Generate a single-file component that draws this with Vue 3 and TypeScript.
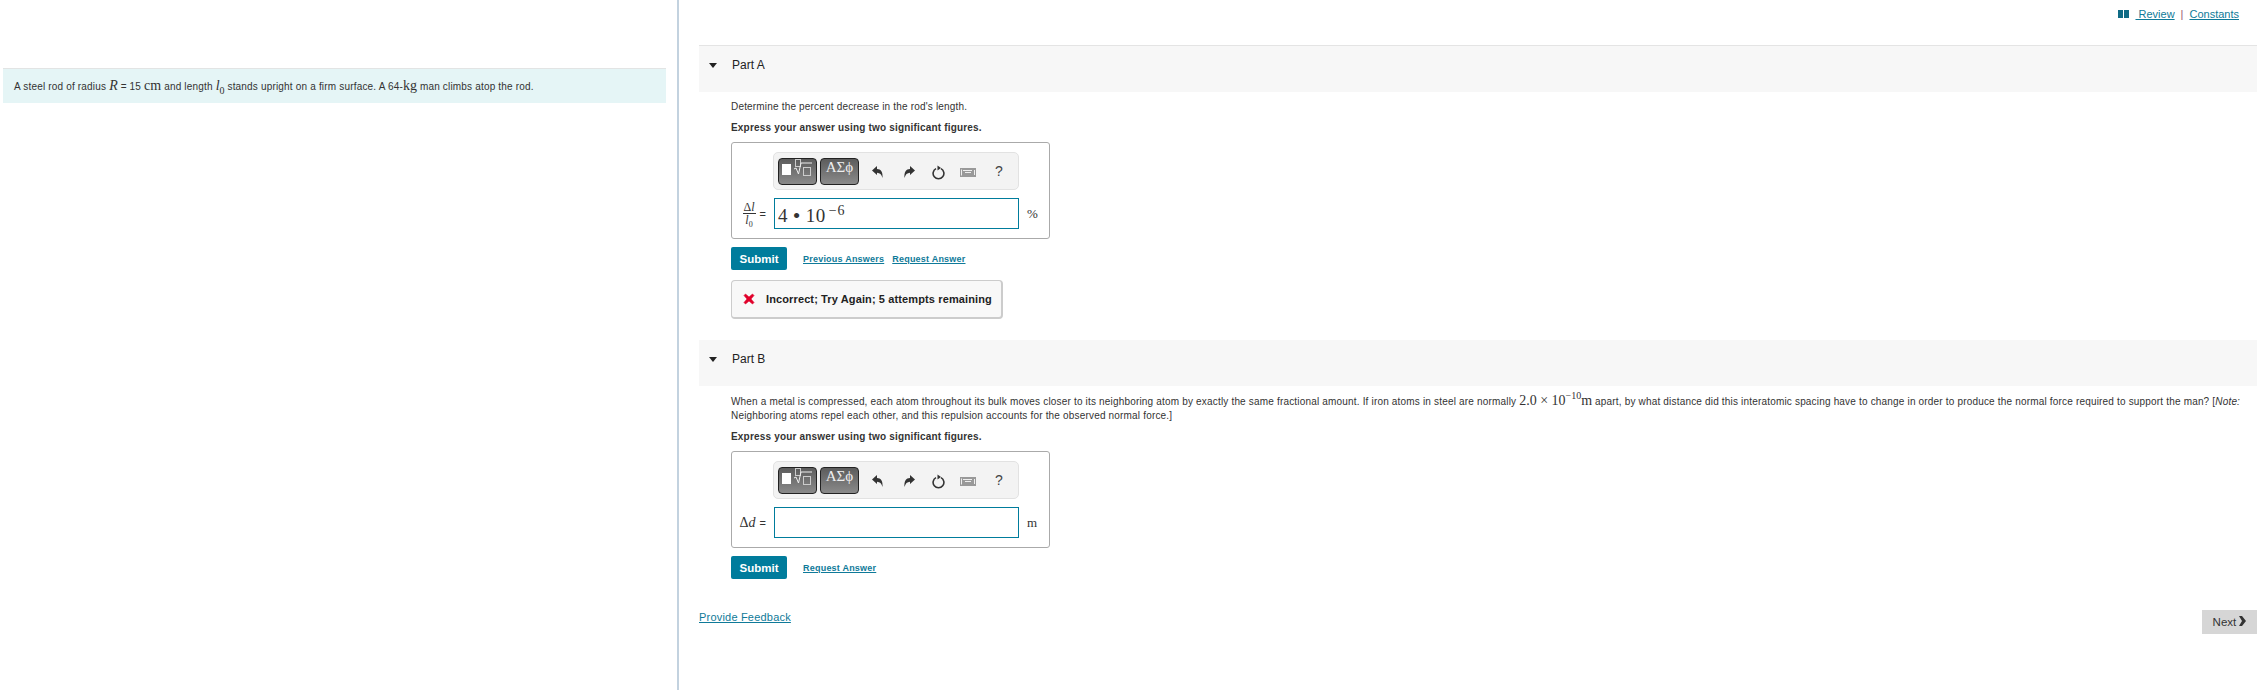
<script setup lang="ts">
interface Part {
  name: string
  unit: string
  links: string[]
}

const parts: Part[] = [
  { name: 'Part A', unit: '%', links: ['Previous Answers', 'Request Answer'] },
  { name: 'Part B', unit: 'm', links: ['Request Answer'] },
]
</script>

<template>
  <div class="page">
    <aside class="left">
      <div class="intro">
        A steel rod of radius <i class="math big">R</i> = 15 <span class="math big">cm</span> and length
        <span class="math big"><i>l</i><sub>0</sub></span> stands upright on a firm surface. A 64-<span class="math big">kg</span> man climbs atop the rod.
      </div>
    </aside>

    <main class="right">
      <div class="top-links">
        <svg class="book" width="11" height="8" viewBox="0 0 11 8"><path d="M0 0h5v8H0zM6 0h5v8H6z" fill="#0f6b85" /></svg>
        <a class="link">&nbsp;Review</a>
        <span class="sep">|</span>
        <a class="link">Constants</a>
      </div>

      <section v-for="part in parts" :key="part.name" class="part">
        <header class="part-head">
          <span class="caret"></span>
          <span class="part-name">{{ part.name }}</span>
        </header>

        <div class="part-body">
          <p v-if="part.name === 'Part A'" class="text">Determine the percent decrease in the rod's length.</p>
          <p v-else class="text">
            When a metal is compressed, each atom throughout its bulk moves closer to its neighboring atom by exactly the same fractional amount. If iron atoms in steel are normally
            <span class="math big">2.0 × 10<sup>−10</sup>m</span> apart, by what distance did this interatomic spacing have to change in order to produce the normal force required to support the man? [<i>Note:</i><br />
            Neighboring atoms repel each other, and this repulsion accounts for the observed normal force.]
          </p>
          <p class="text strong">Express your answer using two significant figures.</p>

          <div class="answer">
            <div class="toolbar">
              <button class="tool-btn">
                <svg width="37" height="25" viewBox="0 0 37 25" fill="none">
                  <rect x="3" y="5" width="9" height="11" fill="#fff" />
                  <rect x="16.500" y="0.500" width="5" height="7" stroke="#ccc" />
                  <path d="M15 10l2 -1 2.500 6 2.500-11h11" stroke="#eee" />
                  <rect x="24.500" y="8.500" width="7" height="8" stroke="#ccc" />
                </svg>
              </button>
              <button class="tool-btn greek">ΑΣϕ</button>
              <svg class="tool-icon undo" width="11" height="12" viewBox="0 0 11 12"><path d="M0 4.500L5 0v3c4 0 6 3 5.500 9-1-3.500-2.500-5-5.500-5.200V9z" fill="#333" /></svg>
              <svg class="tool-icon redo" width="11" height="12" viewBox="0 0 11 12"><path d="M11 4.500L6 0v3C2 3 0 6 .5 12c1-3.500 2.500-5 5.500-5.200V9z" fill="#333" /></svg>
              <svg class="tool-icon reset" width="13" height="15" viewBox="0 0 13 15" fill="none"><path d="M4 3.600a5.400 5.400 0 1 0 5 0" stroke="#333" stroke-width="1.600" /><path d="M5.500 0.500v5l3.500-2.500z" fill="#333" /></svg>
              <svg class="tool-icon kbd" width="16" height="9" viewBox="0 0 16 9"><rect width="16" height="9" fill="#999" /><path d="M1 1.500h1v6H1zM3 2h9v1H3zM5 4h6v1H5zM14 2h1v5h-1z" fill="#eee" /></svg>
              <span class="help">?</span>
            </div>

            <div class="answer-row">
              <div class="label">
                <span v-if="part.name === 'Part A'" class="frac math">
                  <span class="num">Δ<i>l</i></span>
                  <span class="den"><i>l</i><sub>0</sub></span>
                </span>
                <span v-else class="math delta">Δ<i>d</i></span>
                <span class="eq">=</span>
              </div>
              <div class="input math">
                <template v-if="part.name === 'Part A'">4 <b class="dot">•</b> 10<sup>−6</sup></template>
              </div>
              <span class="unit math">{{ part.unit }}</span>
            </div>
          </div>

          <div class="actions">
            <button class="submit">Submit</button>
            <div class="action-links">
              <a v-for="l in part.links" :key="l" class="link action">{{ l }}</a>
            </div>
          </div>

          <div v-if="part.name === 'Part A'" class="feedback">
            <svg width="12" height="12" viewBox="0 0 12 12"><path d="M1 2.500L2.500 1 6 4l3.500-3L11 2.500 8 6l3 3.500L9.500 11 6 8l-3.500 3L1 9.500 4 6z" fill="#e0002a" stroke="#e0002a" stroke-width=".6" /></svg>
            <span>Incorrect; Try Again; 5 attempts remaining</span>
          </div>
        </div>
      </section>

      <footer class="foot">
        <a class="link provide">Provide Feedback</a>
        <button class="next">Next <svg width="7" height="10" viewBox="0 0 7 10"><path d="M0 0h3l4 5-4 5H0l3-5z" fill="#333" /></svg></button>
      </footer>
    </main>
  </div>
</template>

<style>
html, body { background: #fff; }
</style>

<style scoped>
.page {
  display: flex;
  width: 2257px;
  height: 690px;
  font-family: "Liberation Sans", Arial, sans-serif;
  font-size: 10px;
  letter-spacing: .18px;
  color: #333;
  overflow: hidden;
}

.left {
  box-sizing: border-box;
  width: 679px;
  flex: none;
  padding: 68px 11px 0 3px;
  border-right: 2px solid #c3d2df;
}

.intro {
  height: 35px;
  line-height: 35px;
  padding-left: 11px;
  background: #e5f5f6;
  border-top: 1px solid #e2e4e4;
  box-sizing: border-box;
}

.math { font-family: "Liberation Serif", serif; letter-spacing: 0; }
.big { font-size: 14px; line-height: 0; }
.big sub { font-size: 10px; line-height: 0; }
.big sup { font-size: 10px; line-height: 0; }

.right {
  flex: 1;
  min-width: 0;
  padding-left: 20px;
}

.top-links {
  height: 46px;
  padding: 8px 18px 0 0;
  box-sizing: border-box;
  display: flex;
  justify-content: flex-end;
  align-items: flex-start;
  gap: 4px;
  border-bottom: 1px solid #e4e4e4;
  font-size: 11px;
  letter-spacing: 0;
}
.book { margin: 2px 2px 0 0; }
.sep { color: #9a5a70; margin: 0 2px; }

.link {
  color: #0f7a99;
  text-decoration: underline;
  cursor: pointer;
}

.part-head {
  display: flex;
  align-items: center;
  height: 46px;
  background: #f7f7f7;
  padding-left: 10px;
  padding-bottom: 8px;
  box-sizing: border-box;
  color: #222;
  font-size: 12px;
  letter-spacing: 0;
}
.caret {
  width: 0;
  height: 0;
  border-left: 4.500px solid transparent;
  border-right: 4.500px solid transparent;
  border-top: 5px solid #222;
  margin-right: 15px;
}

.part-body { padding: 8px 0 21px 32px; }
.part + .part .part-body { padding-top: 9px; }
.text {
  margin: 0 0 7px;
  line-height: 14px;
}
.strong { font-weight: 700; }

.answer {
  box-sizing: border-box;
  width: 319px;
  height: 97px;
  border: 1px solid #aaa;
  border-radius: 3px;
  padding: 9px 10px 0 41px;
  margin-top: 7px;
}
.toolbar {
  box-sizing: border-box;
  display: flex;
  align-items: center;
  width: 246px;
  height: 38px;
  background: #f3f3f3;
  border: 1px solid #e2e2e2;
  border-radius: 5px;
  padding-left: 4px;
}
.tool-btn {
  box-sizing: border-box;
  width: 39px;
  height: 27px;
  padding: 0;
  margin-right: 3px;
  border: 1px solid #222;
  border-radius: 4px;
  background: linear-gradient(#5c5c5c, #8a8a8a);
  color: #eee;
  font-family: "Liberation Serif", serif;
  font-size: 15px;
  line-height: 1;
  display: flex;
  justify-content: center;
}
.greek { padding-top: 1px; }
.tool-icon { margin-top: 2px; flex: none; }
.undo { margin-left: 10px; }
.redo { margin-left: 21px; }
.reset { margin-left: 17px; }
.kbd { margin-left: 15px; }
.help { margin-left: 19px; font-size: 14px; color: #444; }

.answer-row {
  display: flex;
  align-items: center;
  margin-top: 8px;
  margin-left: -41px;
}
.label {
  box-sizing: border-box;
  width: 34px;
  flex: none;
  display: flex;
  justify-content: flex-end;
  align-items: center;
  gap: 4px;
}
.frac {
  display: inline-flex;
  flex-direction: column;
  align-items: center;
  font-size: 12px;
  line-height: 12px;
}
.num { border-bottom: 1px solid #333; padding: 0 1px; }
.den sub { font-size: 8px; line-height: 0; }
.delta { font-size: 14px; }
.eq { font-size: 11px; letter-spacing: 0; }
.input {
  box-sizing: border-box;
  width: 245px;
  height: 31px;
  border: 1px solid #007c9c;
  margin-left: 8px;
  padding-left: 3px;
  font-size: 19px;
  line-height: 33px;
  letter-spacing: .5px;
}
.input sup { font-size: 14px; line-height: 0; margin-left: 3px; letter-spacing: 1px; }
.dot { font-family: "Liberation Sans", sans-serif; font-weight: 400; }
.unit { margin-left: 8px; font-size: 13px; }

.actions {
  display: flex;
  align-items: center;
  margin-top: 8px;
  gap: 16px;
}
.submit {
  box-sizing: border-box;
  width: 56px;
  height: 23px;
  padding: 0;
  border: 0;
  border-radius: 2px;
  background: #007c9c;
  color: #fff;
  font: 700 11.500px "Liberation Sans", Arial, sans-serif;
}
.action-links { display: flex; gap: 8px; }
.action { font-size: 9px; font-weight: 700; letter-spacing: .22px; }

.feedback {
  box-sizing: border-box;
  display: flex;
  align-items: center;
  gap: 11px;
  width: 272px;
  height: 39px;
  margin-top: 10px;
  padding-left: 11px;
  background: #f8f8f8;
  border: 1px solid #ccc;
  border-right-width: 2px;
  border-bottom-width: 2px;
  border-radius: 4px;
  font-weight: 700;
  font-size: 11px;
  letter-spacing: .12px;
  color: #222;
}

.foot {
  display: flex;
  justify-content: space-between;
  align-items: flex-start;
  margin-top: 10px;
}
.provide { font-size: 11px; letter-spacing: .2px; line-height: 14px; }
.next {
  width: 55px;
  height: 24px;
  padding: 0;
  border: 0;
  background: #d6d6d6;
  color: #333;
  font: 11.500px "Liberation Sans", Arial, sans-serif;
}
</style>
